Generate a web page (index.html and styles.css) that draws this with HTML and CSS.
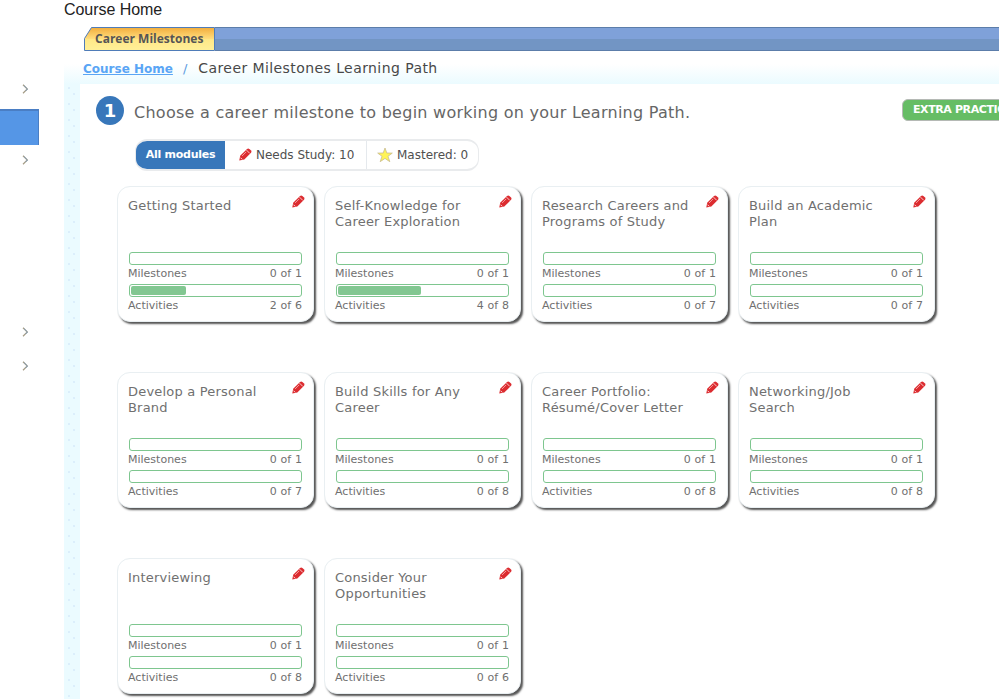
FILE: index.html
```html
<!DOCTYPE html>
<html lang="en">
<head>
<meta charset="utf-8">
<title>Course Home</title>
<link rel="stylesheet" href="styles.css">
</head>
<body>
<svg class="defs" width="0" height="0" aria-hidden="true">
  <symbol id="pencil" viewBox="0 0 14 14">
    <path d="M0.3 13.5 L1.3 8.3 L8.6 1.1 Q10 0 11.2 1 L13 2.8 Q13.9 3.9 13 5.2 L5.7 12.5 Z" fill="#dc2c30"/>
    <path d="M8.1 2.3 L11.6 5.8" stroke="#fff" stroke-width=".8"/>
    <path d="M3.3 8.6 L7.7 4.2" stroke="#f4a5a5" stroke-width="1"/>
    <path d="M1.6 10.4 L3.4 12.2" stroke="#fff" stroke-width=".9"/>
  </symbol>
  <symbol id="chevron" viewBox="0 0 8 10">
    <path d="M1 .8 L5.3 5 L1 9.2" fill="none" stroke="#a49c86" stroke-width="1.2"/>
    <path d="M2 1.6 L5.5 5 L3.6 7" fill="none" stroke="#7f9dba" stroke-width=".9"/>
  </symbol>
</svg>
<div class="app">
  <nav class="rail">
    <svg class="chev"><use href="#chevron"/></svg>
    <div class="rail-active"></div>
    <svg class="chev"><use href="#chevron"/></svg>
    <svg class="chev chev-gap"><use href="#chevron"/></svg>
    <svg class="chev chev-last"><use href="#chevron"/></svg>
  </nav>
  <main class="main">
    <div class="page-title">Course Home</div>
    <div class="tabbar">
      <div class="tab">
        <svg class="tab-bg" viewBox="0 0 131 24">
          <defs><linearGradient id="gold" x2="0" y2="1">
            <stop offset="0" stop-color="#f2ad3c"/><stop offset=".48" stop-color="#ffdc7c"/>
            <stop offset=".52" stop-color="#ffe887"/><stop offset="1" stop-color="#fff099"/>
          </linearGradient></defs>
          <path d="M.5 23.5 V11.5 L7.5 .5 H130.5 V23.5 Z" fill="url(#gold)" stroke="#4f7cb8"/>
        </svg>
        <span class="tab-label">Career Milestones</span>
      </div>
      <div class="tab-rest"></div>
    </div>
    <div class="crumbs"><a class="crumb-link">Course Home</a><span class="slash">/</span><span class="crumb-here">Career Milestones Learning Path</span></div>
    <div class="content">
      <div class="dots"></div>
      <div class="panel">
        <div class="step">
          <span class="num">1</span>
          <h1 class="step-text">Choose a career milestone to begin working on your Learning Path.</h1>
          <span class="extra">EXTRA PRACTICE</span>
        </div>
        <div class="filters">
          <span class="filter on">All modules</span>
          <span class="filter needs"><svg class="pencil"><use href="#pencil"/></svg><span>Needs Study: 10</span></span>
          <span class="filter mastered"><svg class="star" viewBox="0 0 16 16"><path d="M8 1 L9.8 6 L15.3 6.1 L11 9.3 L12.8 14.7 L8 11.4 L3.2 14.7 L5 9.3 L.7 6.1 L6.2 6 Z" fill="#fff457" stroke="#c9bd92" stroke-width=".8"/></svg><span>Mastered: 0</span></span>
        </div>
        <div class="cards" id="cards"></div>
      </div>
    </div>
  </main>
</div>
<script src="cards.js"></script>
</body>
</html>
```
FILE: cards.js
```js
const modules = [
  ["Getting Started", 2, 6],
  ["Self-Knowledge for Career Exploration", 4, 8],
  ["Research Careers and Programs of Study", 0, 7],
  ["Build an Academic Plan", 0, 7],
  ["Develop a Personal Brand", 0, 7],
  ["Build Skills for Any Career", 0, 8],
  ["Career Portfolio: Résumé/Cover Letter", 0, 8],
  ["Networking/Job Search", 0, 8],
  ["Interviewing", 0, 8],
  ["Consider Your Opportunities", 0, 6]
];

function meter(label, done, total) {
  const fill = done ? `<div class="fill" style="width:${done / total * 98}%"></div>` : "";
  return `<div class="bar">${fill}</div>
    <div class="counts"><span class="label">${label}</span><span class="value">${done} of ${total}</span></div>`;
}

document.getElementById("cards").innerHTML = modules.map(([title, done, total]) => `
  <article class="card">
    <header class="card-head">
      <h2 class="card-title">${title}</h2>
      <svg class="pencil"><use href="#pencil"/></svg>
    </header>
    ${meter("Milestones", 0, 1)}
    ${meter("Activities", done, total)}
  </article>`).join("");
```
FILE: styles.css
```css
* { box-sizing: border-box; }
body { margin: 0; background: #fff; font-family: "DejaVu Sans", sans-serif; color: #707070; }
svg { display: block; flex: none; }
.defs { position: absolute; }
.app { display: flex; height: 699px; overflow: hidden; }

.rail { width: 64px; flex: none; padding-top: 84px; }
.chev { width: 8px; height: 10px; margin-left: 21.5px; }
.rail-active { width: 39px; height: 36px; margin: 15px 0 10px; background: #5596e6; border-top: 2px solid #4a7ec4; border-right: 1px solid #4a7ec4; }
.chev-gap { margin-top: 162px; }
.chev-last { margin-top: 24px; }

.main { width: 935px; flex: none; overflow: hidden; }
.page-title { height: 27px; padding-top: 1px; font: 16px/18px "Liberation Sans", sans-serif; color: #222; letter-spacing: -.05px; white-space: nowrap; }
.tabbar { display: flex; height: 24px; margin-left: 20px; }
.tab { position: relative; width: 131px; }
.tab-bg { position: absolute; inset: 0; width: 131px; height: 24px; }
.tab-label { position: relative; display: block; padding-left: 11px; font: bold 12px/23px "Open Sans", sans-serif; color: #555; white-space: nowrap; }
.tab-rest { flex: 1; border: solid #5c7daa; border-width: 1px 0; background: linear-gradient(#7fa1d9 0 50%, #7295c4 50%); }
.crumbs { display: flex; align-items: baseline; height: 33px; padding-left: 19px; line-height: 34px; background: linear-gradient(#fff 40%, #ebfbff); white-space: nowrap; }
.crumb-link { font-size: 12px; font-weight: bold; color: #5aa5f5; text-decoration: underline; }
.slash { margin: 0 10px; font-size: 13px; color: #5c9be0; }
.crumb-here { padding-left: 1px; font-size: 14px; letter-spacing: .42px; color: #484848; }

.content { display: flex; height: 615px; }
.dots { width: 16px; background: radial-gradient(circle at 5px 4px, #d0e6f8 .5px, transparent 1px) 0 0 / 16px 16px, radial-gradient(circle at 10px 10px, #d0e6f8 .5px, transparent 1px) 0 0 / 16px 16px, #ebfbff; }
.panel { flex: 1; min-width: 0; padding-top: 12px; }
.step { display: flex; height: 30px; padding-left: 16px; white-space: nowrap; }
.num { width: 28px; height: 29px; flex: none; border-radius: 50%; background: #3877ba; color: #fff; font-size: 18px; font-weight: bold; line-height: 29px; text-align: center; }
.step-text { width: 758px; flex: none; margin: 0 0 0 10px; font-size: 16px; font-weight: normal; line-height: 33px; letter-spacing: .26px; color: #666; }
.extra { flex: none; margin-left: 10px; height: 22px; margin-top: 3px; padding: 0 10px; border: 1px solid #b5b9b5; border-radius: 6px; background: #66bd65; color: #fff; font-size: 11px; font-weight: bold; line-height: 20px; letter-spacing: -.4px; }
.filters { display: inline-flex; height: 32px; margin: 13px 0 0 55px; border: solid #e9ebed; border-width: 2px 1px; border-radius: 12px; overflow: hidden; white-space: nowrap; font-size: 12px; color: #505050; line-height: 26px; vertical-align: top; }
.filter { display: flex; align-items: center; padding-bottom: 1px; }
.on { width: 89px; justify-content: center; background: #3877ba; color: #fff; font-size: 11px; font-weight: bold; letter-spacing: -.28px; }
.needs { width: 141px; padding-left: 14px; gap: 4px; }
.mastered { width: 112px; padding-left: 10px; gap: 4px; border-left: 1px solid #e5e9ed; }
.pencil { width: 13px; height: 13px; }
.star { width: 16px; height: 16px; }

.cards { display: grid; grid-template-columns: repeat(4, 197px); column-gap: 10px; row-gap: 50px; margin: 15px 0 0 37px; }
.card { height: 136px; padding: 9px 11px 0 10px; border: 1px solid #e9eff2; border-radius: 13px; background: #fff; box-shadow: 2px 2px 2px #555; }
.card-head { display: flex; justify-content: space-between; height: 56px; }
.card-head .pencil { margin-right: -3px; margin-top: -1px; }
.card-title { width: 150px; margin: 2px 0 0; font-size: 13px; font-weight: normal; line-height: 16px; letter-spacing: .2px; }
.bar { height: 13px; margin: 0 0 0 1px; padding: 1px; border: 1px solid #7ec68f; border-radius: 3px; }
.fill { height: 9px; border-radius: 2px; background: #82c791; }
.counts { display: flex; justify-content: space-between; height: 19px; font-size: 11px; line-height: 17px; }
.value { letter-spacing: .1px; }
```
